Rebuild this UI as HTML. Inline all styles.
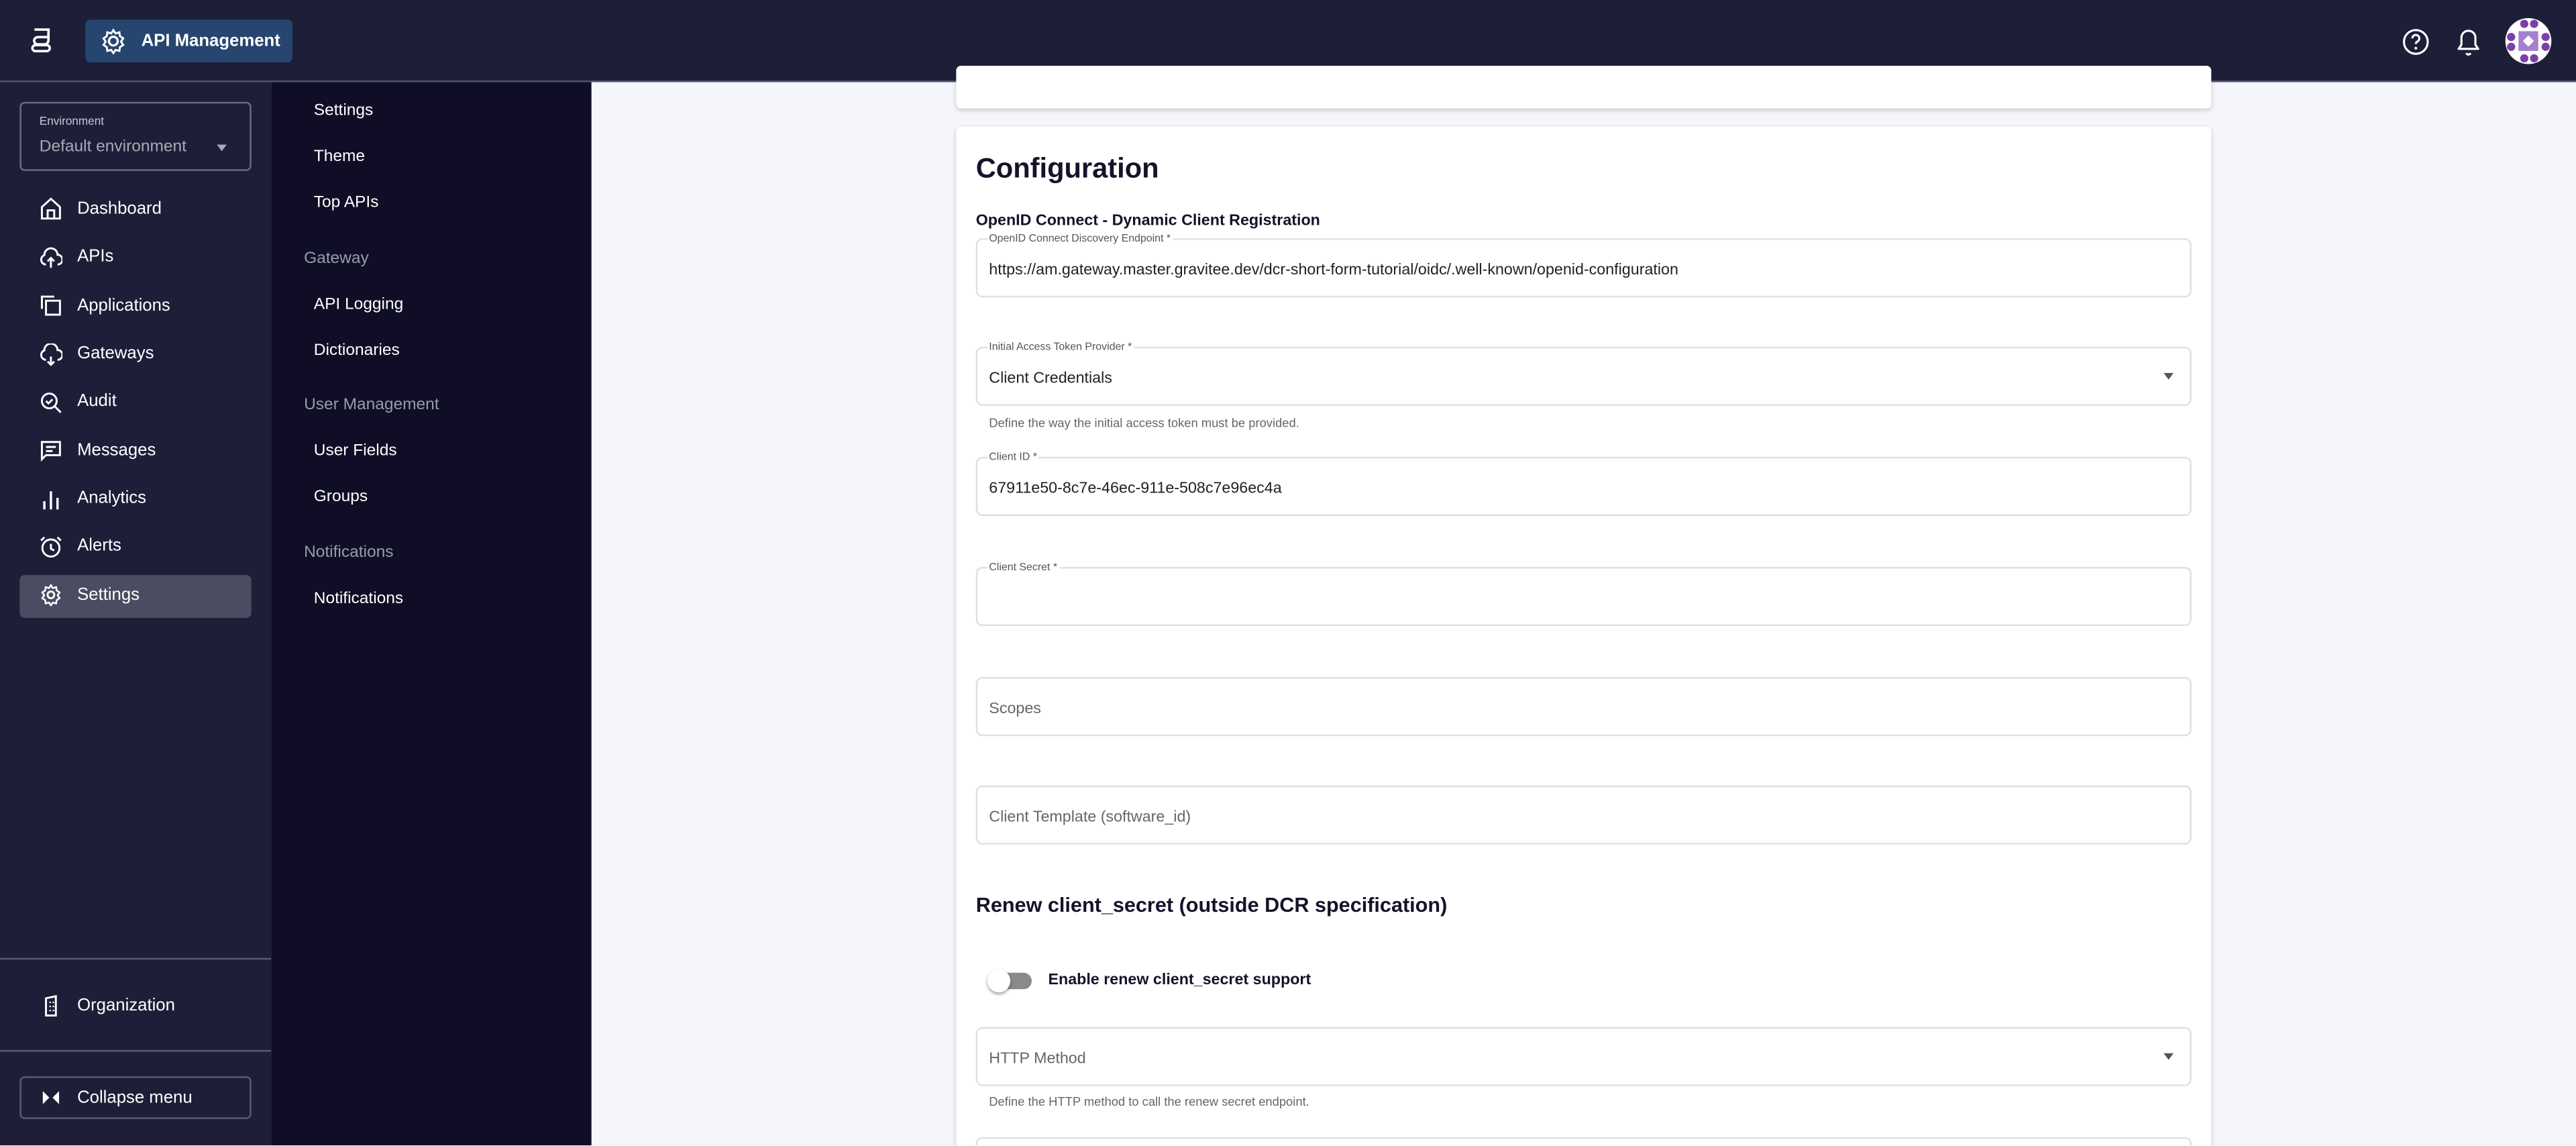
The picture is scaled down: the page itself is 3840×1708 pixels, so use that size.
<!DOCTYPE html>
<html><head><meta charset="utf-8"><style>
*{box-sizing:border-box;margin:0;padding:0}
html,body{width:3840px;height:1708px;overflow:hidden;background:#f5f6fb;font-family:"Liberation Sans",sans-serif}
#w{position:absolute;left:0;top:0;width:1568px;height:697px;overflow:hidden;transform:scale(2.449);transform-origin:0 0}
.a{position:absolute}
.top{left:0;top:0;width:1568px;height:50px;background:#1d1f38;border-bottom:1px solid #55576e}
.nav{left:0;top:50px;width:165px;height:648px;background:#1d1f38}
.sub{left:165px;top:50px;width:195px;height:648px;background:#0f0e26}
.ni{position:absolute;left:47px;color:#fff;font-size:10.5px}
.ic{position:absolute;left:24px;width:14px;height:14px}
.si{position:absolute;left:26px;color:#fff;font-size:10px}
.sh{position:absolute;left:20px;color:#9a9aab;font-size:10px}
.card{background:#fff;border-radius:3px;box-shadow:0 1px 3px rgba(0,0,0,.18)}
.f{position:absolute;left:12px;width:740px;height:36px;border:1px solid #e0e0e4;border-radius:4px;background:#fff}
.f .l{position:absolute;left:6px;top:-4px;background:#fff;padding:0 1px;font-size:6.5px;color:#555;line-height:7px}
.f .v{position:absolute;left:7px;top:13px;font-size:9.5px;color:#222}
.f .p{position:absolute;left:7px;top:13px;font-size:9.5px;color:#666}
.h{position:absolute;left:20px;font-size:7.5px;color:#666}
.dd{position:absolute;right:10px;top:15px;width:0;height:0;border-left:3.5px solid transparent;border-right:3.5px solid transparent;border-top:4px solid #555}
.dot{position:absolute;width:5px;height:5px;border-radius:50%;background:#7e3fa8}
</style></head><body><div id="w">
<div class="a top">
 <svg class="a" style="left:19px;top:17px" width="12" height="16" viewBox="0 0 12 16"><path d="M2 1h8.5v6.5a2.5 2.5 0 0 1-2.5 2.5H4a2.2 2.2 0 0 1 0-4.4h6.5M2 10.5h7.5a1.8 1.8 0 0 1 0 3.6H2.5a1.8 1.8 0 0 1 0-3.6" fill="none" stroke="#fff" stroke-width="1.5"/></svg>
 <div class="a" style="left:52px;top:12px;width:126px;height:26px;background:#26456f;border-radius:3px"></div>
 <svg class="a" style="left:61px;top:17px" width="16" height="16" viewBox="0 0 24 24"><circle cx="12" cy="12" r="4" fill="none" stroke="#fff" stroke-width="2"/><path d="M12 2l2 3 3.5-1 .5 3.5 3 2-2 3 2 3-3 2-.5 3.5-3.5-1-2 3-2-3-3.5 1-.5-3.5-3-2 2-3-2-3 3-2 .5-3.5 3.5 1z" fill="none" stroke="#fff" stroke-width="1.8"/></svg>
 <div class="a" style="left:86px;top:19px;color:#fff;font-size:10.5px;font-weight:bold">API Management</div>
 <svg class="a" style="left:1462px;top:17px" width="17" height="17" viewBox="0 0 20 20"><circle cx="10" cy="10" r="8.5" fill="none" stroke="#fff" stroke-width="1.5"/><path d="M7.5 7.5a2.5 2.5 0 1 1 3.5 2.3c-.7.4-1 .9-1 1.7" fill="none" stroke="#fff" stroke-width="1.5"/><circle cx="10" cy="14.5" r="1" fill="#fff"/></svg>
 <svg class="a" style="left:1494px;top:16px" width="17" height="19" viewBox="0 0 20 22"><path d="M3 16h14l-2-3V8a5 5 0 0 0-10 0v5z M8.5 19a1.6 1.6 0 0 0 3 0" fill="none" stroke="#fff" stroke-width="1.5" stroke-linejoin="round"/></svg>
 <div class="a" style="left:1525px;top:11px;width:28px;height:28px;border-radius:50%;background:#fff;overflow:hidden">
  <div class="a" style="left:8px;top:8px;width:12px;height:12px;background:#a57fd0"></div>
  <div class="a" style="left:11px;top:11px;width:6px;height:6px;background:#fff;transform:rotate(45deg) scale(.8)"></div>
  <i class="dot" style="left:9px;top:1px"></i><i class="dot" style="left:14.5px;top:1px"></i>
  <i class="dot" style="left:1px;top:9px"></i><i class="dot" style="left:1px;top:14.5px"></i>
  <i class="dot" style="left:22px;top:9px"></i><i class="dot" style="left:22px;top:14.5px"></i>
  <i class="dot" style="left:9px;top:22px"></i><i class="dot" style="left:14.5px;top:22px"></i>
 </div>
</div>
<div class="a nav">
 <div class="a" style="left:12px;top:12px;width:141px;height:42px;border:1px solid #6b6c80;border-radius:3px">
  <div class="a" style="left:11px;top:8px;font-size:7px;color:#c8c8d2">Environment</div>
  <div class="a" style="left:11px;top:21px;font-size:10px;color:#a9a9b7">Default environment</div>
  <div class="a" style="left:119px;top:25px;border-left:3.5px solid transparent;border-right:3.5px solid transparent;border-top:4px solid #a9a9b7"></div>
 </div>
 <svg class="ic" style="top:70px" viewBox="0 0 14 14"><path d="M1.5 13V6L7 1l5.5 5v7zM5 13V8h4v5" fill="none" stroke="#fff" stroke-width="1.2"/></svg><div class="ni" style="top:71px">Dashboard</div>
 <svg class="ic" style="top:100px" viewBox="0 0 14 14"><path d="M4 11a3 3 0 0 1-1-5.8A4 4 0 0 1 11 5a3 3 0 0 1 0 6M7 13V7M5 9l2-2 2 2" fill="none" stroke="#fff" stroke-width="1.2"/></svg><div class="ni" style="top:100px">APIs</div>
 <svg class="ic" style="top:129px" viewBox="0 0 14 14"><path d="M1.5 9V1.5H9M4 12.5V4h8.5v8.5z" fill="none" stroke="#fff" stroke-width="1.2"/></svg><div class="ni" style="top:130px">Applications</div>
 <svg class="ic" style="top:159px" viewBox="0 0 14 14"><path d="M4 10a3 3 0 0 1-1-5.8A4 4 0 0 1 11 4a3 3 0 0 1 0 6M7 8v5M5 11l2 2 2-2" fill="none" stroke="#fff" stroke-width="1.2"/></svg><div class="ni" style="top:159px">Gateways</div>
 <svg class="ic" style="top:188px" viewBox="0 0 14 14"><circle cx="6" cy="6" r="4.5" fill="none" stroke="#fff" stroke-width="1.2"/><path d="M9.5 9.5L13 13M4 6l1.5 1.5L8 5" fill="none" stroke="#fff" stroke-width="1.2"/></svg><div class="ni" style="top:188px">Audit</div>
 <svg class="ic" style="top:217px" viewBox="0 0 14 14"><path d="M1.5 12.5V2h11v8H4zM4 5h6M4 7.5h4" fill="none" stroke="#fff" stroke-width="1.2"/></svg><div class="ni" style="top:218px">Messages</div>
 <svg class="ic" style="top:247px" viewBox="0 0 14 14"><path d="M3 13V8M7 13V2M11 13V6" fill="none" stroke="#fff" stroke-width="1.4"/></svg><div class="ni" style="top:247px">Analytics</div>
 <svg class="ic" style="top:276px" viewBox="0 0 14 14"><circle cx="7" cy="7.5" r="5.2" fill="none" stroke="#fff" stroke-width="1.2"/><path d="M7 5v3l2 1M1 3l2-2M13 3l-2-2" fill="none" stroke="#fff" stroke-width="1.2"/></svg><div class="ni" style="top:276px">Alerts</div>
 <div class="a" style="left:12px;top:300px;width:141px;height:26px;background:#4a4c62;border-radius:3px"></div>
 <svg class="ic" style="top:305px" viewBox="0 0 24 24"><circle cx="12" cy="12" r="3.5" fill="none" stroke="#fff" stroke-width="2"/><path d="M12 2l2 3 3.5-1 .5 3.5 3 2-2 3 2 3-3 2-.5 3.5-3.5-1-2 3-2-3-3.5 1-.5-3.5-3-2 2-3-2-3 3-2 .5-3.5 3.5 1z" fill="none" stroke="#fff" stroke-width="1.8"/></svg><div class="ni" style="top:306px">Settings</div>
 <div class="a" style="left:0;top:533px;width:165px;height:1px;background:#5a5b70"></div>
 <svg class="ic" style="top:555px" viewBox="0 0 14 14"><path d="M4 13V2.5l6-1.2V13zM4 13h6" fill="none" stroke="#fff" stroke-width="1.2"/><path d="M6 5h1M8 5h1M6 7.5h1M8 7.5h1M6 10h1M8 10h1" stroke="#fff" stroke-width=".8"/></svg><div class="ni" style="top:556px">Organization</div>
 <div class="a" style="left:0;top:589px;width:165px;height:1px;background:#5a5b70"></div>
 <div class="a" style="left:12px;top:605px;width:141px;height:26px;border:1px solid #5a5b70;border-radius:3px"></div>
 <svg class="a" style="left:26px;top:614px" width="10" height="8" viewBox="0 0 10 8"><path d="M0 0l4 4-4 4zM10 0L6 4l4 4z" fill="#fff"/></svg>
 <div class="ni" style="top:612px">Collapse menu</div>
</div>
<div class="a sub">
 <div class="si" style="top:12px">Settings</div>
 <div class="si" style="top:40px">Theme</div>
 <div class="si" style="top:68px">Top APIs</div>
 <div class="sh" style="top:102px">Gateway</div>
 <div class="si" style="top:130px">API Logging</div>
 <div class="si" style="top:158px">Dictionaries</div>
 <div class="sh" style="top:191px">User Management</div>
 <div class="si" style="top:219px">User Fields</div>
 <div class="si" style="top:247px">Groups</div>
 <div class="sh" style="top:281px">Notifications</div>
 <div class="si" style="top:309px">Notifications</div>
</div>
<div class="a card" style="left:582px;top:40px;width:764px;height:26px"></div>
<div class="a card" style="left:582px;top:77px;width:764px;height:640px">
 <div class="a" style="left:12px;top:16px;font-size:17px;font-weight:bold;color:#13132a">Configuration</div>
 <div class="a" style="left:12px;top:52px;font-size:9.5px;font-weight:bold;color:#13132a">OpenID Connect - Dynamic Client Registration</div>
 <div class="f" style="top:68px"><span class="l">OpenID Connect Discovery Endpoint *</span><span class="v">https://am.gateway.master.gravitee.dev/dcr-short-form-tutorial/oidc/.well-known/openid-configuration</span></div>
 <div class="f" style="top:134px"><span class="l">Initial Access Token Provider *</span><span class="v">Client Credentials</span><i class="dd"></i></div>
 <div class="h" style="top:176px">Define the way the initial access token must be provided.</div>
 <div class="f" style="top:201px"><span class="l">Client ID *</span><span class="v">67911e50-8c7e-46ec-911e-508c7e96ec4a</span></div>
 <div class="f" style="top:268px"><span class="l">Client Secret *</span></div>
 <div class="f" style="top:335px"><span class="p">Scopes</span></div>
 <div class="f" style="top:401px"><span class="p">Client Template (software_id)</span></div>
 <div class="a" style="left:12px;top:467px;font-size:12.5px;font-weight:bold;color:#13132a">Renew client_secret (outside DCR specification)</div>
 <div class="a" style="left:20px;top:515px;width:26px;height:10px;border-radius:5px;background:#8a8a8a"></div>
 <div class="a" style="left:19px;top:513px;width:14px;height:14px;border-radius:50%;background:#fff;box-shadow:0 1px 2px rgba(0,0,0,.4)"></div>
 <div class="a" style="left:56px;top:514px;font-size:9.5px;font-weight:bold;color:#13132a">Enable renew client_secret support</div>
 <div class="f" style="top:548px"><span class="p">HTTP Method</span><i class="dd"></i></div>
 <div class="h" style="top:589px">Define the HTTP method to call the renew secret endpoint.</div>
 <div class="f" style="top:615px"></div>
</div>
</div></body></html>
